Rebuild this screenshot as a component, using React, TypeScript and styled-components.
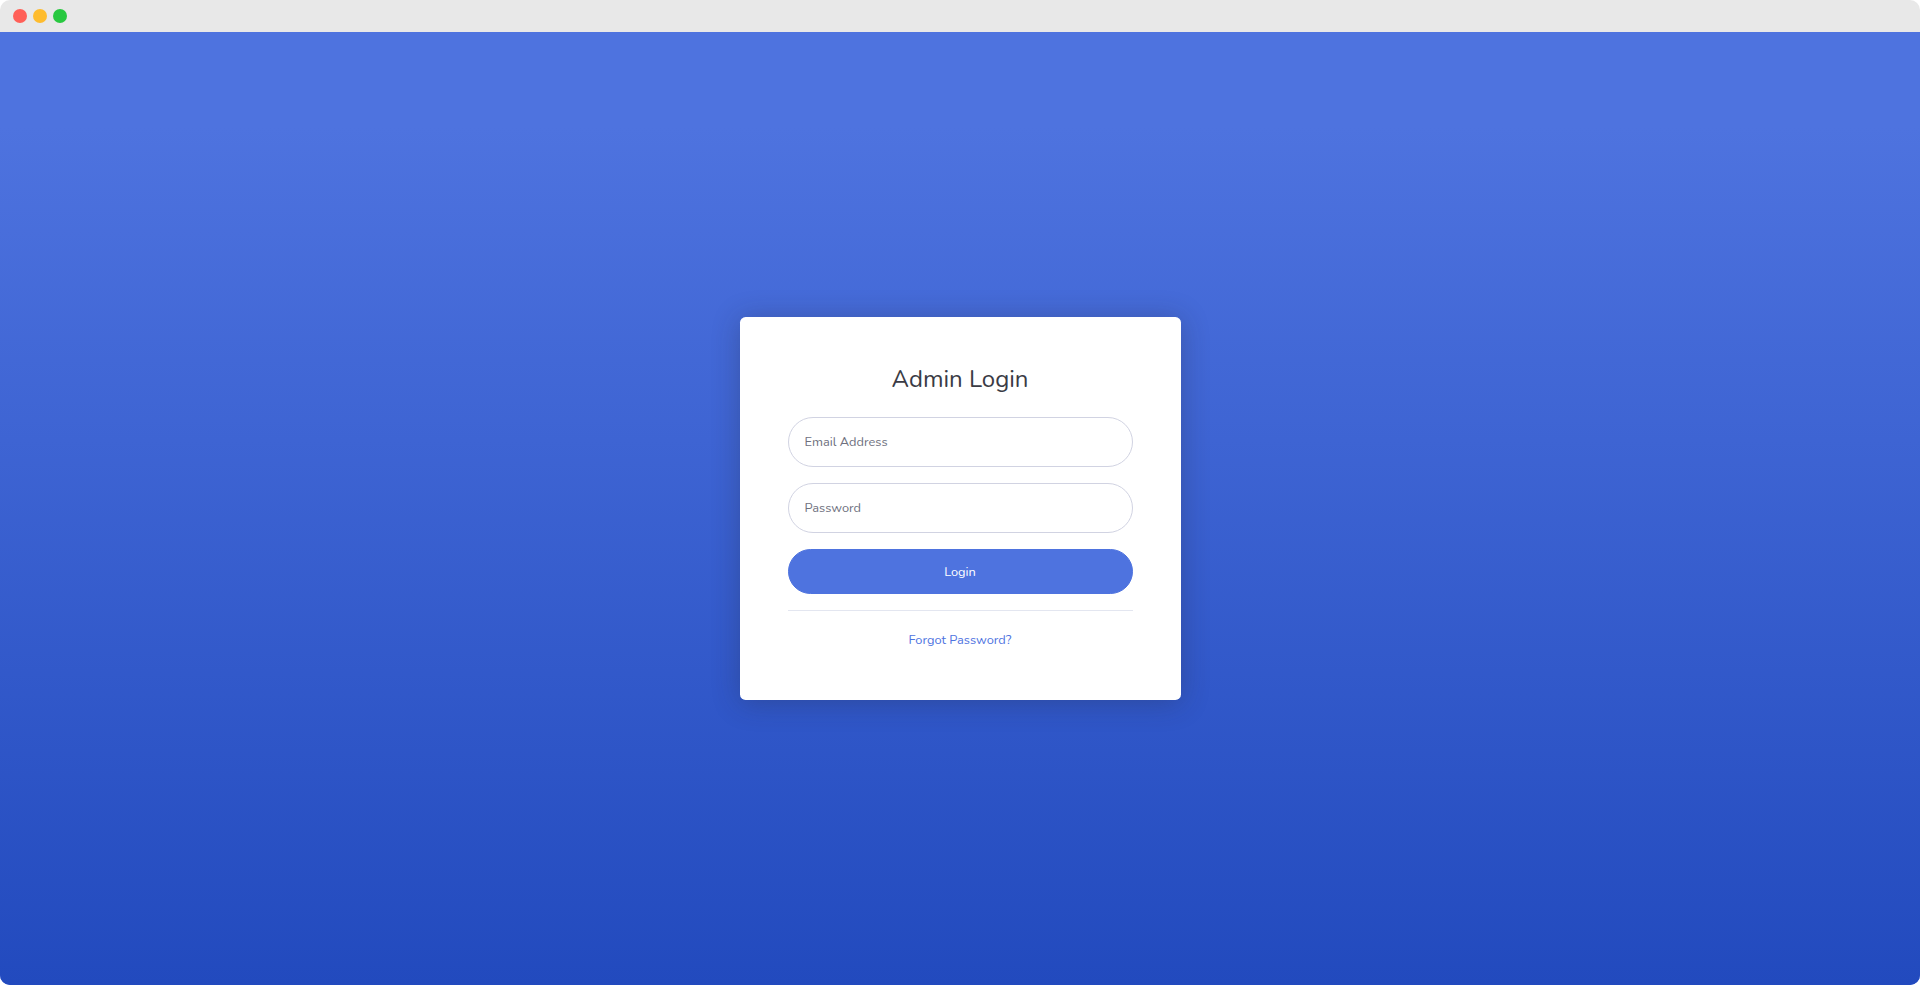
import React from "react";
import styled, { createGlobalStyle } from "styled-components";

const GlobalStyle = createGlobalStyle`
  html, body { margin: 0; padding: 0; height: 100%; background: #ffffff; }
  #root { height: 100%; }
  * { box-sizing: border-box; }
  body { font-family: "Nunito", "Lato", "Open Sans", sans-serif; }
`;

const Window = styled.div`
  height: 985px;
  width: 1920px;
  display: flex;
  flex-direction: column;
  border-radius: 10px;
  overflow: hidden;
`;

const TitleBar = styled.div`
  height: 32px;
  flex: 0 0 32px;
  background: #e8e8e8;
  display: flex;
  align-items: center;
  gap: 6px;
  padding-left: 13px;
`;

const Dot = styled.span<{ $color: string }>`
  width: 14px;
  height: 14px;
  border-radius: 50%;
  background: ${(p) => p.$color};
  display: inline-block;
`;

const Content = styled.main`
  flex: 1;
  background-color: #4e73df;
  background-image: linear-gradient(180deg, #4e73df 10%, #224abe 100%);
  display: flex;
  align-items: center;
  justify-content: center;
`;

const Card = styled.div`
  width: 441px;
  background: #ffffff;
  border-radius: 5.6px;
  box-shadow: 0 2.4px 28px 0 rgba(38, 39, 55, 0.3);
  padding: 48px;
  display: flex;
  flex-direction: column;
`;

const Title = styled.h1`
  margin: 0 0 24px;
  font-size: 24px;
  line-height: 28.8px;
  font-weight: 400;
  color: #3a3b45;
  text-align: center;
`;

const Form = styled.form`
  display: flex;
  flex-direction: column;
  gap: 16px;
  margin: 0;
`;

const Input = styled.input`
  height: 50px;
  width: 100%;
  border: 1px solid #d1d3e2;
  border-radius: 160px;
  padding: 0 16px;
  font-family: inherit;
  font-size: 12.8px;
  color: #6e707e;
  outline: none;
  background: #fff;
  &::placeholder { color: #6e707e; opacity: 1; }
`;

const Button = styled.button`
  height: 45px;
  width: 100%;
  border: 1px solid #4e73df;
  background: #4e73df;
  color: #ffffff;
  border-radius: 160px;
  font-family: inherit;
  font-size: 12.8px;
  font-weight: 400;
  cursor: pointer;
`;

const Divider = styled.hr`
  margin: 16px 0;
  border: 0;
  border-top: 1px solid #e3e6f0;
`;

const LinkRow = styled.div`
  text-align: center;
  line-height: 24px;
`;

const SmallLink = styled.a`
  font-size: 12.8px;
  color: #4e73df;
  text-decoration: none;
`;

export default function App() {
  return (
    <>
      <GlobalStyle />
      <Window>
        <TitleBar>
          <Dot $color="#ff5f57" />
          <Dot $color="#febc2e" />
          <Dot $color="#28c840" />
        </TitleBar>
        <Content>
          <Card>
            <Title>Admin Login</Title>
            <Form onSubmit={(e) => e.preventDefault()}>
              <Input type="email" placeholder="Email Address" />
              <Input type="password" placeholder="Password" />
              <Button type="submit">Login</Button>
            </Form>
            <Divider />
            <LinkRow>
              <SmallLink href="#">Forgot Password?</SmallLink>
            </LinkRow>
          </Card>
        </Content>
      </Window>
    </>
  );
}
